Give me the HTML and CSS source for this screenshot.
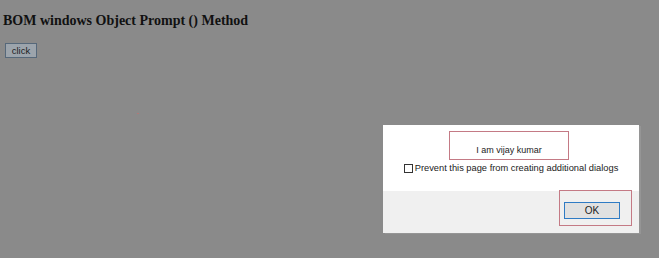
FILE: index.html
```html
<!DOCTYPE html>
<html>
<head>
<meta charset="utf-8">
<link rel="stylesheet" href="styles.css">
</head>
<body>
<h3 class="title">BOM windows Object Prompt () Method</h3>
<button class="click-btn">click</button>
<span class="speck"></span>
<div class="dialog">
  <div class="dialog-body">
    <div class="mark msg-mark"><span class="msg">I am vijay kumar</span></div>
    <label class="prevent"><span class="cb"></span><span>Prevent this page from creating additional dialogs</span></label>
  </div>
  <div class="dialog-foot">
    <div class="mark ok-mark"><button class="ok">OK</button></div>
  </div>
</div>
</body>
</html>
```
FILE: styles.css
```css
html, body {
  margin: 0;
  padding: 0;
}
body {
  background: #8a8a8a;
  width: 659px;
  height: 258px;
  overflow: hidden;
  position: relative;
  font-family: "Liberation Sans", Arial, sans-serif;
}
.title {
  font-family: "Liberation Serif", "Times New Roman", serif;
  font-weight: bold;
  font-size: 14px;
  color: #111;
  margin: 0;
  padding: 14px 0 0 3px;
  line-height: 14px;
}
.click-btn {
  display: block;
  margin: 15px 0 0 5px;
  width: 32px;
  height: 15px;
  padding: 0;
  background: #9ca4ac;
  border: 1px solid #56687a;
  border-radius: 0;
  font-family: "Liberation Sans", Arial, sans-serif;
  font-size: 9.5px;
  color: #1e1e1e;
  line-height: 13px;
}
.speck {
  position: absolute;
  left: 137px;
  top: 113px;
  width: 2px;
  height: 1px;
  background: #b07878;
}
.dialog {
  position: absolute;
  left: 383px;
  top: 125px;
  width: 256px;
  height: 108px;
  background: #ffffff;
  display: flex;
  flex-direction: column;
  box-shadow: 2px 1px 0 #959595;
}
.dialog-body {
  height: 66px;
  display: flex;
  flex-direction: column;
  align-items: center;
}
.mark {
  border: 1px solid #c47a85;
  box-sizing: border-box;
}
.msg-mark {
  margin-top: 6px;
  margin-right: 4px;
  width: 120px;
  height: 29px;
  display: flex;
  justify-content: center;
  align-items: flex-end;
  padding-bottom: 3px;
}
.msg {
  font-size: 9px;
  color: #222;
  line-height: 11px;
}
.prevent {
  margin-top: 3px;
  display: flex;
  align-items: center;
  gap: 2px;
  font-size: 9.3px;
  color: #222;
  line-height: 11px;
}
.cb {
  width: 9px;
  height: 9px;
  box-sizing: border-box;
  border: 1px solid #333;
  background: #fff;
}
.dialog-foot {
  flex: 1;
  background: #f0f0f0;
  display: flex;
  justify-content: flex-end;
  align-items: flex-start;
  padding-right: 7px;
}
.ok-mark {
  margin-top: -1px;
  width: 73px;
  height: 36px;
  padding: 11px 0 0 4px;
}
.ok {
  display: block;
  width: 56px;
  height: 17px;
  padding: 0;
  margin: 0;
  background: #e1e1e1;
  border: 1px solid #2f7bc4;
  border-radius: 0;
  font-family: "Liberation Sans", Arial, sans-serif;
  font-size: 10px;
  color: #222;
  line-height: 15px;
}
```
